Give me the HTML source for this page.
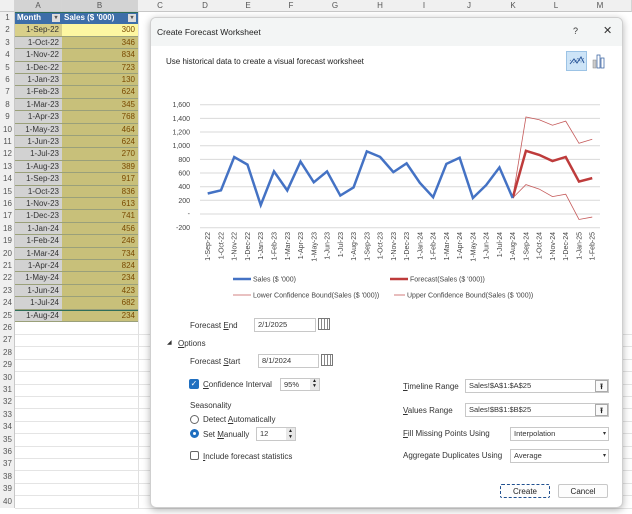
<!DOCTYPE html>
<html><head><meta charset="utf-8"><style>
*{margin:0;padding:0;box-sizing:border-box}
body{width:632px;height:514px;overflow:hidden;background:#fff;font-family:"Liberation Sans",sans-serif;font-size:8px;color:#222;position:relative}
.a{position:absolute}
.hdr{background:#f0f0f0;border-right:1px solid #d4d4d4;border-bottom:1px solid #c8c8c8;color:#555;text-align:center;font-size:8px;line-height:12px}
.cell{position:absolute;font-size:8px;line-height:12px;text-align:right;padding-right:3px;border-bottom:1px solid #9aa07a}
.in{position:absolute;background:#fff;border:1px solid #c8c8c8;font-size:7.5px;line-height:12px;padding-left:3px;color:#333}
.lbl{position:absolute;font-size:8px;color:#333;white-space:nowrap}
.btn{position:absolute;background:#fdfdfd;border:1px solid #c8c8c8;border-radius:2px;text-align:center;font-size:8px;line-height:13px}
.cl{position:absolute;top:0;font-size:8px;color:#555;line-height:12px;width:10px;text-align:center}
</style></head><body>
<div class="a hdr" style="left:0;top:0;width:15px;height:12px"></div>
<div class="a hdr" style="left:15px;top:0;width:47px;height:12px;background:#d3d3d3">A</div>
<div class="a hdr" style="left:62px;top:0;width:76px;height:12px;background:#d3d3d3">B</div>
<div class="a hdr" style="left:138px;top:0;width:494px;height:12px"></div>
<div class="cl" style="left:155px">C</div><div class="cl" style="left:200px">D</div><div class="cl" style="left:243px">E</div><div class="cl" style="left:286px">F</div><div class="cl" style="left:330px">G</div><div class="cl" style="left:375px">H</div><div class="cl" style="left:419px">I</div><div class="cl" style="left:464px">J</div><div class="cl" style="left:508px">K</div><div class="cl" style="left:551px">L</div><div class="cl" style="left:595px">M</div>
<div id="rows"></div>
<div class="a" style="left:15px;top:12px;width:47px;height:12px;background:#3d6ea8;color:#fff;font-weight:bold;line-height:12px;padding-left:2px;font-size:8px">Month<span style="position:absolute;right:2px;top:2px;width:8px;height:8px;background:#ddd;color:#555;font-size:6px;line-height:8px;text-align:center">▾</span></div>
<div class="a" style="left:62px;top:12px;width:76px;height:12px;background:#3d6ea8;color:#fff;font-weight:bold;line-height:12px;padding-left:2px;font-size:8px">Sales ($ '000)<span style="position:absolute;right:2px;top:2px;width:8px;height:8px;background:#ddd;color:#555;font-size:6px;line-height:8px;text-align:center">▾</span></div>
<div class="a" style="left:14px;top:12px;width:125px;height:299px;border:1.5px solid #2f6e5a"></div>
<div class="a" style="left:0;top:12px;width:15px;height:496px;background:#f0f0f0;border-right:1px solid #c8c8c8"></div>
<script>
var m=["1-Sep-22","1-Oct-22","1-Nov-22","1-Dec-22","1-Jan-23","1-Feb-23","1-Mar-23","1-Apr-23","1-May-23","1-Jun-23","1-Jul-23","1-Aug-23","1-Sep-23","1-Oct-23","1-Nov-23","1-Dec-23","1-Jan-24","1-Feb-24","1-Mar-24","1-Apr-24","1-May-24","1-Jun-24","1-Jul-24","1-Aug-24"];
var v=[300,346,834,723,130,624,345,768,464,624,270,389,917,836,613,741,456,246,734,824,234,423,682,234];
var h="";
for(var i=0;i<40;i++){var t=12+i*12.4;
h+='<div class="a" style="left:0;top:'+t+'px;width:15px;height:12.4px;font-size:8px;color:#555;text-align:center;line-height:12px;z-index:2">'+(i+1)+'</div>';
if(i>0&&i<25){h+='<div class="cell" style="left:15px;top:'+t+'px;width:47px;height:12.4px;background:'+(i==1?'#d8cf8a':'#d2d2d2')+';color:#333">'+m[i-1]+'</div>';
h+='<div class="cell" style="left:62px;top:'+t+'px;width:76px;height:12.4px;background:'+(i==1?'#fdf7a2':'#c8c07a')+';color:#7a4a00">'+v[i-1]+'</div>';}
else if(i>0){h+='<div class="a" style="left:15px;top:'+(t+12)+'px;width:617px;height:1px;background:#e4e4e4"></div>';}}
document.getElementById('rows').innerHTML=h;
</script>
<div class="a" style="left:138px;top:12px;width:1px;height:496px;background:#e0e0e0"></div>
<div class="a" style="left:150px;top:17px;width:473px;height:491px;background:#fff;border:1px solid #cfcfcf;border-radius:6px;box-shadow:0 2px 8px rgba(0,0,0,.3);overflow:hidden">
<div class="a" style="left:0;top:0;width:100%;height:28px;background:#f3f5f5"></div>
<div class="lbl" style="left:6px;top:9px;font-size:8.5px;color:#222">Create Forecast Worksheet</div>
<div class="lbl" style="left:422px;top:8px;font-size:9px">?</div>
<div class="lbl" style="left:452px;top:6px;font-size:11px">✕</div>
<div class="lbl" style="left:15px;top:39px;color:#222">Use historical data to create a visual forecast worksheet</div>
<div class="a" style="left:415px;top:33px;width:21px;height:20px;background:#cde4f7;border:1px solid #9cc3e5"></div>
<svg class="a" style="left:415px;top:33px" width="50" height="20"><polyline points="4,13 8,8 11,12 15,6 18,12" fill="none" stroke="#2b579a" stroke-width="1"/><polyline points="4,9 8,12 12,7 15,11 18,7" fill="none" stroke="#2b579a" stroke-width="0.7" stroke-dasharray="1,1"/><rect x="27" y="9" width="3" height="8" fill="#ccc" stroke="#888" stroke-width=".5"/><rect x="31" y="4" width="3" height="13" fill="#fff" stroke="#2b579a" stroke-width=".7"/><rect x="35" y="7" width="3" height="10" fill="#fff" stroke="#2b579a" stroke-width=".7"/></svg>
</div>
<svg class="a" style="left:0;top:0" width="632" height="514" font-family="Liberation Sans" font-size="7" fill="#444">
<g stroke="#d9d9d9" stroke-width="1">
<line x1="200" x2="600" y1="104.7" y2="104.7"/><line x1="200" x2="600" y1="118.4" y2="118.4"/><line x1="200" x2="600" y1="132" y2="132"/><line x1="200" x2="600" y1="145.7" y2="145.7"/><line x1="200" x2="600" y1="159.4" y2="159.4"/><line x1="200" x2="600" y1="173" y2="173"/><line x1="200" x2="600" y1="186.7" y2="186.7"/><line x1="200" x2="600" y1="200.3" y2="200.3"/><line x1="200" x2="600" y1="214" y2="214"/><line x1="200" x2="600" y1="227.7" y2="227.7"/>
</g>
<g text-anchor="end">
<text x="190" y="107">1,600</text><text x="190" y="121">1,400</text><text x="190" y="134.5">1,200</text><text x="190" y="148">1,000</text><text x="190" y="162">800</text><text x="190" y="175.5">600</text><text x="190" y="189">400</text><text x="190" y="203">200</text><text x="190" y="216">-</text><text x="190" y="230">-200</text>
</g>
<g transform="translate(207.7,214) scale(13.26,-0.0683)" fill="none">
<polyline vector-effect="non-scaling-stroke" stroke="#c55a5a" stroke-width="0.8" points="23,234 24,1420 25,1380 26,1300 27,1360 28,1035 29,1095"/>
<polyline vector-effect="non-scaling-stroke" stroke="#c55a5a" stroke-width="0.8" points="23,234 24,430 25,365 26,255 27,290 28,-80 29,-45"/>
<polyline vector-effect="non-scaling-stroke" stroke="#be3b3b" stroke-width="2.5" points="23,234 24,925 25,865 26,775 27,835 28,475 29,525"/>
<polyline vector-effect="non-scaling-stroke" stroke="#4472c4" stroke-width="2.5" points="0,300 1,346 2,834 3,723 4,130 5,624 6,345 7,768 8,464 9,624 10,270 11,389 12,917 13,836 14,613 15,741 16,456 17,246 18,734 19,824 20,234 21,423 22,682 23,234"/>
</g>
<g id="xl"></g>
<line x1="233" x2="251" y1="279" y2="279" stroke="#4472c4" stroke-width="2.5"/><text x="253" y="281.5">Sales ($ '000)</text>
<line x1="390" x2="408" y1="279" y2="279" stroke="#be3b3b" stroke-width="2.5"/><text x="410" y="281.5">Forecast(Sales ($ '000))</text>
<line x1="233" x2="251" y1="295" y2="295" stroke="#c55a5a" stroke-width="0.8"/><text x="253" y="297.5">Lower Confidence Bound(Sales ($ '000))</text>
<line x1="394" x2="405" y1="295" y2="295" stroke="#c55a5a" stroke-width="0.8"/><text x="407" y="297.5">Upper Confidence Bound(Sales ($ '000))</text>
</svg>
<script>
var mm=m.concat(["1-Sep-24","1-Oct-24","1-Nov-24","1-Dec-24","1-Jan-25","1-Feb-25"]),s="";
for(var i=0;i<30;i++){var x=207.7+i*13.26+2.5;s+='<text transform="translate('+x+',232) rotate(-90)" text-anchor="end">'+mm[i]+'</text>';}
document.getElementById('xl').innerHTML=s;
</script>
<div class="lbl" style="left:190px;top:321px">Forecast <u>E</u>nd</div>
<div class="in" style="left:254px;top:318px;width:62px;height:14px">2/1/2025</div>
<div class="a" style="left:318px;top:318px;width:12px;height:12px;border:1px solid #777;background:repeating-linear-gradient(90deg,#fff 0 2px,#888 2px 3px)"></div>
<div class="lbl" style="left:167px;top:339px;font-size:6px">◢</div>
<div class="lbl" style="left:178px;top:339px"><u>O</u>ptions</div>
<div class="lbl" style="left:190px;top:357px">Forecast <u>S</u>tart</div>
<div class="in" style="left:258px;top:354px;width:61px;height:14px">8/1/2024</div>
<div class="a" style="left:321px;top:354px;width:12px;height:12px;border:1px solid #777;background:repeating-linear-gradient(90deg,#fff 0 2px,#888 2px 3px)"></div>
<div class="a" style="left:189px;top:379px;width:10px;height:10px;background:#1f6fc0;border-radius:2px;color:#fff;font-size:8px;line-height:10px;text-align:center">✓</div>
<div class="lbl" style="left:203px;top:380px"><u>C</u>onfidence Interval</div>
<div class="in" style="left:280px;top:378px;width:40px;height:13px">95%</div>
<div class="a" style="left:310px;top:379px;width:9px;height:11px;background:#e8e8e8;font-size:5px;line-height:5px;text-align:center">▲<br>▼</div>
<div class="lbl" style="left:190px;top:401px">Seasonality</div>
<div class="a" style="left:190px;top:415px;width:9px;height:9px;border:1px solid #666;border-radius:50%"></div>
<div class="lbl" style="left:203px;top:415px">Detect <u>A</u>utomatically</div>
<div class="a" style="left:190px;top:429px;width:9px;height:9px;border:3px solid #1f6fc0;border-radius:50%"></div>
<div class="lbl" style="left:203px;top:430px">Set <u>M</u>anually</div>
<div class="in" style="left:256px;top:427px;width:40px;height:14px">12</div>
<div class="a" style="left:286px;top:428px;width:9px;height:12px;background:#e8e8e8;font-size:5px;line-height:6px;text-align:center">▲<br>▼</div>
<div class="a" style="left:190px;top:451px;width:9px;height:9px;border:1px solid #666;border-radius:2px"></div>
<div class="lbl" style="left:203px;top:452px"><u>I</u>nclude forecast statistics</div>
<div class="lbl" style="left:403px;top:382px"><u>T</u>imeline Range</div>
<div class="in" style="left:465px;top:379px;width:144px;height:14px">Sales!$A$1:$A$25</div>
<div class="a" style="left:595px;top:380px;width:13px;height:12px;border:1px solid #aaa;background:#fafafa;font-size:8px;text-align:center;line-height:11px;font-weight:bold">⭱</div>
<div class="lbl" style="left:403px;top:406px"><u>V</u>alues Range</div>
<div class="in" style="left:465px;top:403px;width:144px;height:14px">Sales!$B$1:$B$25</div>
<div class="a" style="left:595px;top:404px;width:13px;height:12px;border:1px solid #aaa;background:#fafafa;font-size:8px;text-align:center;line-height:11px;font-weight:bold">⭱</div>
<div class="lbl" style="left:403px;top:429px"><u>F</u>ill Missing Points Using</div>
<div class="in" style="left:510px;top:427px;width:99px;height:14px">Interpolation<span style="position:absolute;right:2px;font-size:6px">▾</span></div>
<div class="lbl" style="left:403px;top:451px">Aggregate Duplicates Using</div>
<div class="in" style="left:510px;top:449px;width:99px;height:14px">Average<span style="position:absolute;right:2px;font-size:6px">▾</span></div>
<div class="btn" style="left:500px;top:484px;width:50px;height:14px;border:1px dashed #1f4f8f">Create</div>
<div class="btn" style="left:558px;top:484px;width:50px;height:14px">Cancel</div>
</body></html>
